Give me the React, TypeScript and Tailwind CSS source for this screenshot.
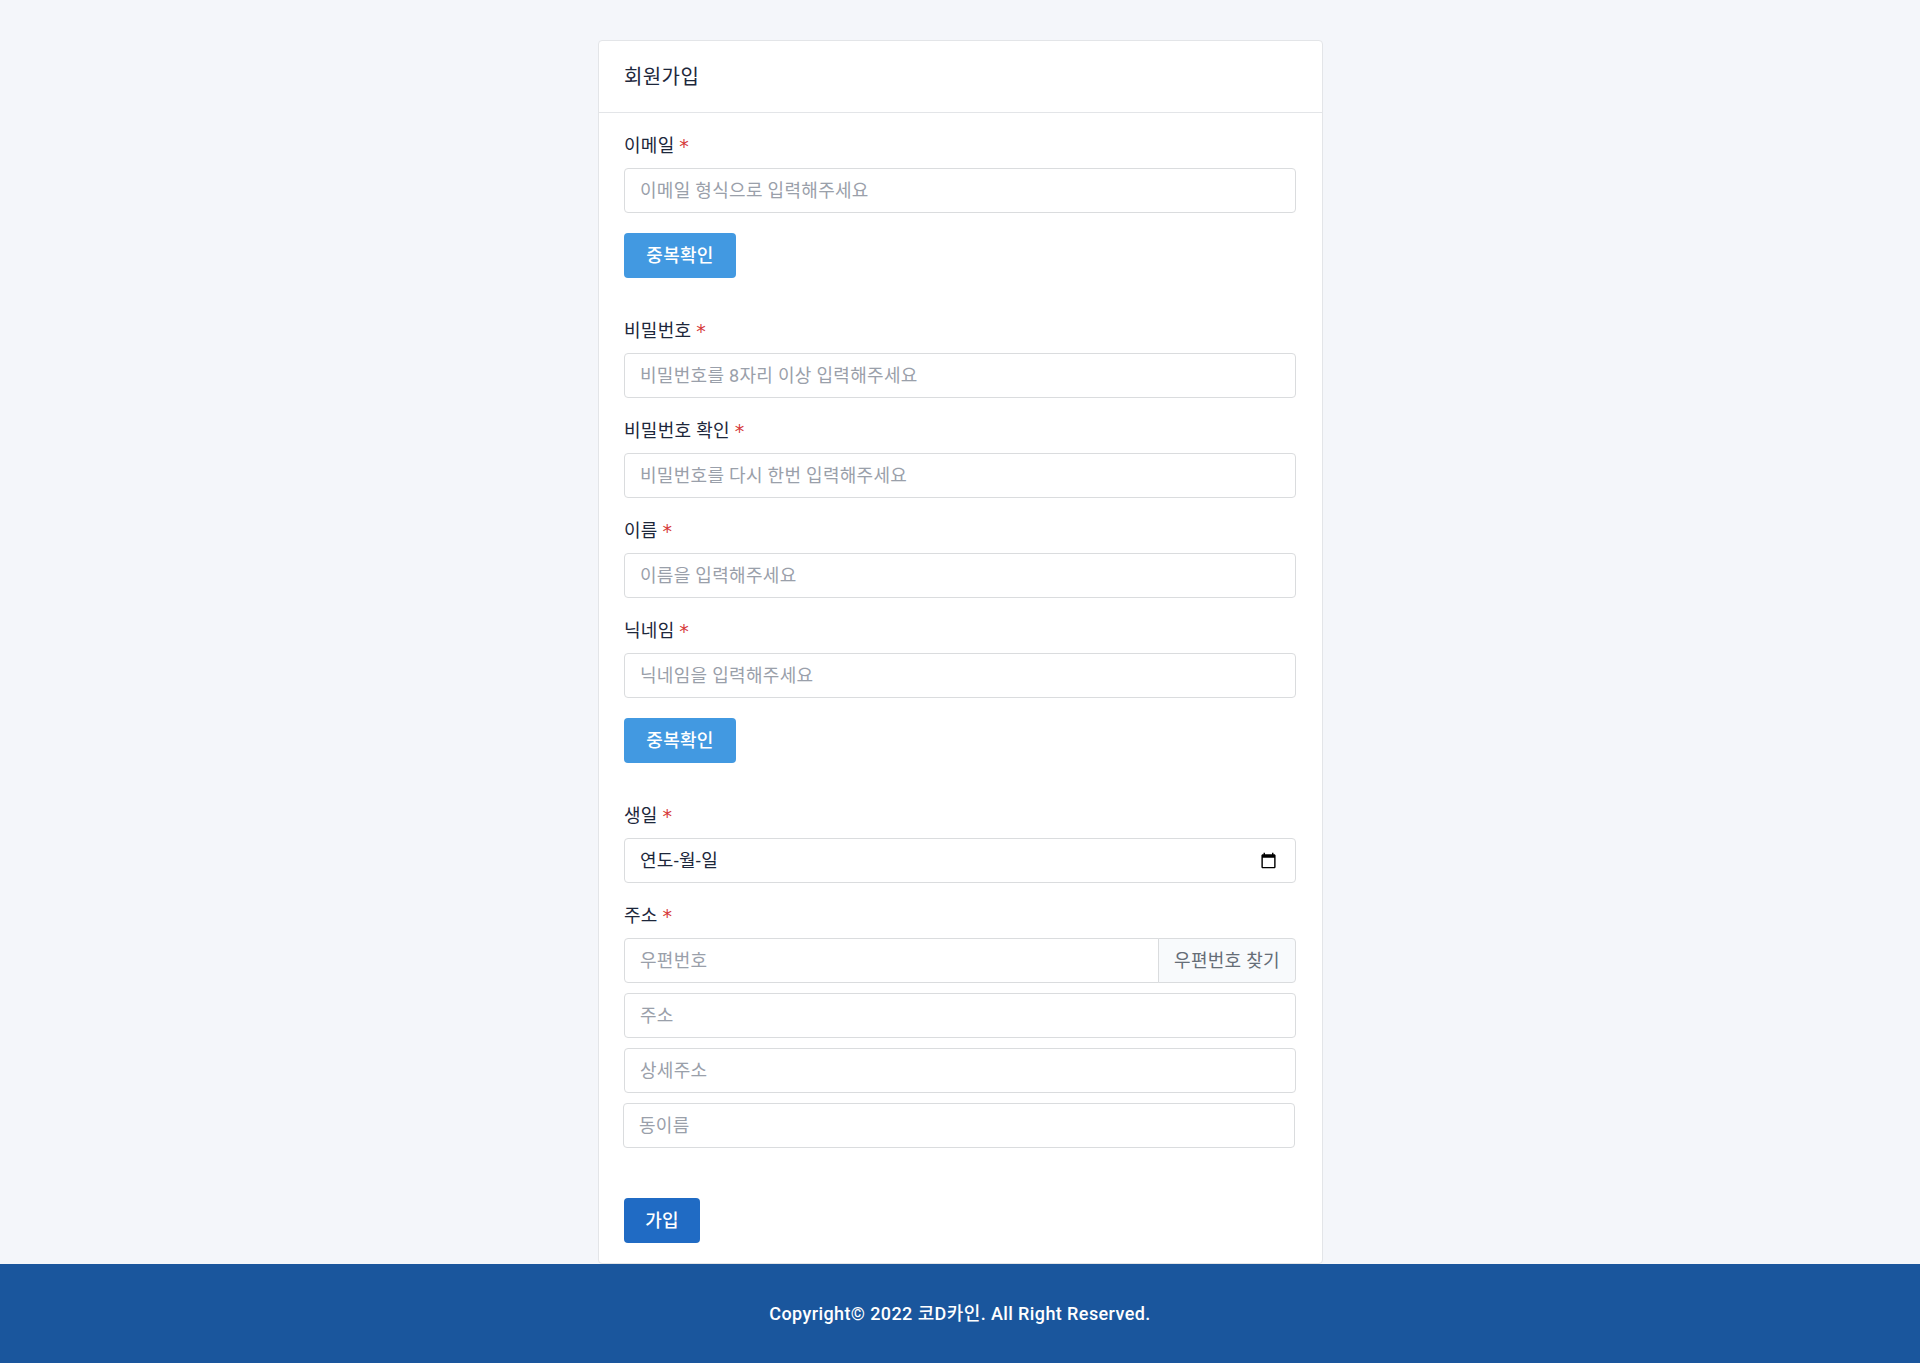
const FONT = "font-['Roboto','Noto_Sans_CJK_KR',sans-serif]";

const Label = ({ text }: { text: string }) => (
  <label className="block h-6 mb-[11px] text-[18px] leading-[26px] tracking-[0.3px] text-[#1d273b]">
    {text} <span className="font-['DejaVu_Sans'] text-[19px] leading-none align-[-1px] text-[#d63939]">*</span>
  </label>
);

const inputClass =
  "block w-full h-[45px] px-[15px] bg-white border border-[#dadcde] rounded text-[18px] tracking-[0.3px] text-[#1d273b] placeholder:text-[#9aa0aa] outline-none";

const Field = ({ label, placeholder }: { label: string; placeholder: string }) => (
  <div className="mb-5">
    <Label text={label} />
    <input type="text" placeholder={placeholder} className={inputClass} />
  </div>
);

const CalendarIcon = () => (
  <svg width="17" height="17" viewBox="0 0 24 24" fill="#000">
    <path d="M20 3h-1V1h-2v2H7V1H5v2H4c-1.1 0-2 .9-2 2v16c0 1.1.9 2 2 2h16c1.1 0 2-.9 2-2V5c0-1.1-.9-2-2-2zm0 18H4V8h16v13z" />
  </svg>
);

export default function App() {
  return (
    <div className={`${FONT} min-h-[1363px] flex flex-col bg-[#f4f6fa]`}>
      <main className="w-[725px] ml-[598px] mt-10 bg-white border border-[#e3e5e8] rounded h-[1224px]">
        <div className="h-[72px] flex items-center pl-[25px] border-b border-[#e3e5e8]">
          <h1 className="text-[20px] leading-7 tracking-[0.4px] text-[#1d273b]">회원가입</h1>
        </div>
        <div className="pl-[25px] pr-[26px] pt-5">
          <div className="mb-5">
            <Label text="이메일" />
            <input type="text" placeholder="이메일 형식으로 입력해주세요" className={inputClass} />
          </div>
          <button className="block w-[112px] h-[45px] pb-px mb-10 rounded bg-[#4299e1] text-white text-[18px] tracking-[0.3px] font-medium">
            중복확인
          </button>
          <Field label="비밀번호" placeholder="비밀번호를 8자리 이상 입력해주세요" />
          <Field label="비밀번호 확인" placeholder="비밀번호를 다시 한번 입력해주세요" />
          <Field label="이름" placeholder="이름을 입력해주세요" />
          <div className="mb-5">
            <Label text="닉네임" />
            <input type="text" placeholder="닉네임을 입력해주세요" className={inputClass} />
          </div>
          <button className="block w-[112px] h-[45px] pb-px mb-10 rounded bg-[#4299e1] text-white text-[18px] tracking-[0.3px] font-medium">
            중복확인
          </button>
          <div className="mb-5">
            <Label text="생일" />
            <div className="flex items-center justify-between h-[45px] pl-[15px] pr-[18px] border border-[#dadcde] rounded text-[18px] tracking-[0.3px] text-[#1d273b]">
              <span>연도-월-일</span>
              <CalendarIcon />
            </div>
          </div>
          <Label text="주소" />
          <div className="flex h-[45px] mb-[10px]">
            <input
              type="text"
              placeholder="우편번호"
              className="flex-1 min-w-0 h-full px-[15px] border border-[#dadcde] rounded-l text-[18px] tracking-[0.3px] placeholder:text-[#9aa0aa] outline-none"
            />
            <button className="w-[138px] h-full -ml-px bg-[#f8fafc] border border-[#dadcde] rounded-r text-[18px] tracking-[0.3px] text-[#656d77]">
              우편번호 찾기
            </button>
          </div>
          <input type="text" placeholder="주소" className={`${inputClass} mb-[10px]`} />
          <input type="text" placeholder="상세주소" className={`${inputClass} mb-[10px]`} />
          <input
            type="text"
            placeholder="동이름"
            className="block w-[672px] -ml-px h-[45px] px-[15px] border border-[#dadcde] rounded text-[18px] tracking-[0.3px] placeholder:text-[#9aa0aa] outline-none mb-[50px]"
          />
          <button className="block w-[76px] h-[45px] pb-px rounded bg-[#206bc4] text-white text-[18px] tracking-[0.3px] font-medium">
            가입
          </button>
        </div>
      </main>
      <footer className="h-[99px] pb-px bg-[#1a569d] flex items-center justify-center text-white text-[18px] tracking-[0.4px] font-medium">
        Copyright© 2022 코D카인. All Right Reserved.
      </footer>
    </div>
  );
}
